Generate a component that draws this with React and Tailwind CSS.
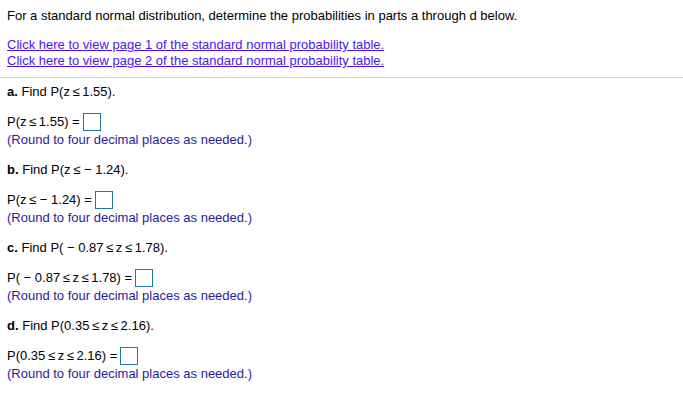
import React from "react";

const Box = () => (
  <span className="ml-[3px] inline-block w-[18px] h-[18px] border-[1.5px] border-[#1b7a9c] bg-white" />
);

const Part = ({ letter, find, expr, first }) => (
  <div className={first ? "mt-[6px]" : "mt-[14px]"}>
    <p className="leading-4">
      <span className="font-bold">{letter}.</span> Find {find}.
    </p>
    <div className="mt-[13px] flex items-center h-[18px] leading-4">
      <span>{expr} =</span>
      <Box />
    </div>
    <p className="mt-[1px] leading-4 text-[#2b1aa0]">(Round to four decimal places as needed.)</p>
  </div>
);

export default function App() {
  const t = "\u2009";
  return (
    <div
      className="w-[683px] h-[408px] bg-white text-[13px] text-black overflow-hidden"
      style={{ fontFamily: '"Liberation Sans", Arial, sans-serif' }}
    >
      <div className="pt-[8px] px-[7px]">
        <p className="leading-4">
          For a standard normal distribution, determine the probabilities in parts a through d below.
        </p>
        <div className="mt-[13px]">
          <p className="leading-4">
            <a className="text-[#4a14ff] underline">Click here to view page 1 of the standard normal probability table.</a>
          </p>
          <p className="leading-4">
            <a className="text-[#4a14ff] underline">Click here to view page 2 of the standard normal probability table.</a>
          </p>
        </div>
      </div>
      <div className="mt-[8px] border-t border-[#d2d2dc]" />
      <div className="px-[7px]">
        <Part first letter="a" find={`P(z${t}≤${t}1.55)`} expr={`P(z${t}≤${t}1.55)`} />
        <Part letter="b" find={`P(z${t}≤ − 1.24)`} expr={`P(z${t}≤ − 1.24)`} />
        <Part letter="c" find={`P( − 0.87${t}≤${t}z${t}≤${t}1.78)`} expr={`P( − 0.87${t}≤${t}z${t}≤${t}1.78)`} />
        <Part letter="d" find={`P(0.35${t}≤${t}z${t}≤${t}2.16)`} expr={`P(0.35${t}≤${t}z${t}≤${t}2.16)`} />
      </div>
    </div>
  );
}
